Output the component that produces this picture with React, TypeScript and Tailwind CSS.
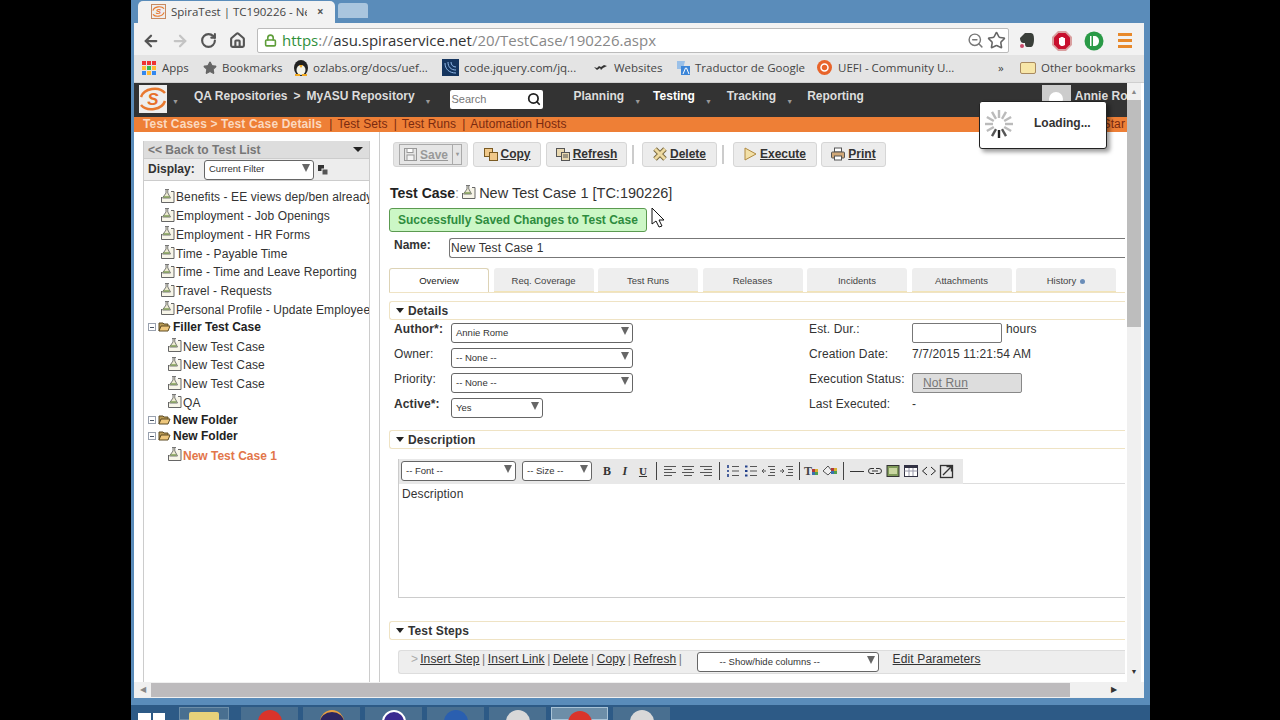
import type { ReactNode } from "react";
import { ArrowLeft, ArrowRight, Home, Lock, RotateCw, Search, Star, ZoomOut } from "lucide-react";

const treeTop = [
  "Benefits - EE views dep/ben already",
  "Employment - Job Openings",
  "Employment - HR Forms",
  "Time - Payable Time",
  "Time - Time and Leave Reporting",
  "Travel - Requests",
  "Personal Profile - Update Employee",
];

const tabs = ["Req. Coverage", "Test Runs", "Releases", "Incidents", "Attachments"];

const taskItems = [
  { w: "w-[57px]", color: "#d9342b", ring: "" },
  { w: "w-[57px]", color: "#2c2560", ring: "border-t-2 border-[#e8a040]" },
  { w: "w-[57px]", color: "#3a2a90", ring: "border-2 border-white" },
  { w: "w-[57px]", color: "#2a5fb0", ring: "" },
  { w: "w-[57px]", color: "#d8d8d8", ring: "" },
  { w: "w-[57px]", color: "#d9342b", ring: "", active: true },
  { w: "w-[57px]", color: "#d8d8d8", ring: "" },
];

function CaseIcon() {
  return (
    <svg width="16" height="16" viewBox="0 0 16 16" className="shrink-0 -mt-[3px]">
      <path d="M1.5 9v5.5h12.5v-11h-3" fill="#f7f5e8" stroke="#666" strokeWidth="1" />
      <path d="M5 1.5h4M6 1.5v3.5l-3.5 5h8L7.8 5V1.5" fill="#ecead0" stroke="#777" strokeWidth="1" />
      <path d="M3.5 9h6" stroke="#7a9a50" strokeWidth="1.4" />
    </svg>
  );
}

function FolderRow({ name }: { name: string }) {
  return (
    <div className="flex items-center h-4 pl-[4px]">
      <span className="w-[8px] h-[8px] border border-gray-400 flex items-center justify-center mr-[2px] shrink-0">
        <span className="w-[4px] h-px bg-gray-600" />
      </span>
      <svg width="13" height="12" viewBox="0 0 13 12" className="mr-[2px] shrink-0">
        <path d="M1 10V2h4l1 1h4v2" fill="#b99a55" stroke="#5c4a22" />
        <path d="M1 10l2-5h9l-2 5z" fill="#eec77c" stroke="#5c4a22" />
      </svg>
      <span className="font-bold text-[12px] text-[#222]">{name}</span>
    </div>
  );
}

function TreeLeaf({ name, indent, active }: { name: string; indent: string; active?: boolean }) {
  return (
    <div className={`flex items-center h-[18.75px] whitespace-nowrap overflow-hidden ${indent}`}>
      <CaseIcon />
      <span className={active ? "font-bold text-[12px] text-[#e2764a]" : "text-[12px] text-[#333] tracking-[0.1px]"}>{name}</span>
    </div>
  );
}

function Select({ label, width, indent }: { label: string; width: string; indent?: string }) {
  return (
    <div className={`h-5 bg-white border border-[#666] rounded-[3px] flex items-center justify-between pl-[4px] pr-[3px] shrink-0 font-normal tracking-normal ${width}`}>
      <span className={`text-[9.5px] text-[#333] whitespace-nowrap ${indent ?? ""}`}>{label}</span>
      <span className="w-0 h-0 border-l-[4px] border-r-[4px] border-t-[8px] border-l-transparent border-r-transparent border-t-[#666] -mt-1" />
    </div>
  );
}

function ToolButton({ label, width, icon }: { label: string; width: string; icon: ReactNode }) {
  return (
    <div className={`h-[25px] bg-[#ececec] border border-[#d6d6d6] rounded-[3px] flex items-center justify-center gap-[3px] pb-[2px] font-bold text-[12px] tracking-normal text-[#333] shrink-0 ${width}`}>
      {icon}
      <span className="underline">{label}</span>
    </div>
  );
}

function SectionHead({ title }: { title: string }) {
  return (
    <div className="h-[19px] border border-r-0 border-[#efe3c4] rounded-l-[3px] flex items-center pl-[6px] gap-[4px] bg-white">
      <span className="w-0 h-0 border-l-[4px] border-r-[4px] border-t-[5px] border-l-transparent border-r-transparent border-t-[#222]" />
      <span className="font-bold text-[12px] text-[#333]">{title}</span>
    </div>
  );
}

function Spinner() {
  const spokes = Array.from({ length: 12 }, (_, i) => i);
  return (
    <svg width="30" height="30" viewBox="0 0 30 30">
      {spokes.map((i) => (
        <rect
          key={i}
          x="13.8"
          y="1"
          width="2.4"
          height="8"
          fill={i === 6 ? "#222" : i === 5 || i === 7 ? "#555" : "#bbb"}
          transform={`rotate(${i * 30} 15 15)`}
        />
      ))}
    </svg>
  );
}

function LogoS({ size }: { size: number }) {
  return (
    <svg width={size} height={size} viewBox="0 0 28 28" className="shrink-0">
      <rect width="28" height="28" fill="#eeeeee" />
      <path d="M2 12C5 3 20 1 26 8" fill="none" stroke="#e8792f" strokeWidth="2.5" />
      <path d="M26 16C23 25 8 27 2 20" fill="none" stroke="#e8792f" strokeWidth="2.5" />
      <text x="14" y="20" textAnchor="middle" fontSize="17" fontWeight="700" fontStyle="italic" fill="#e8702a" fontFamily="Liberation Sans">S</text>
    </svg>
  );
}

function EditIcon({ d, stroke = "#555" }: { d: string; stroke?: string }) {
  return (
    <svg width="18" height="14" viewBox="0 0 18 14" className="shrink-0">
      <path d={d} fill="none" stroke={stroke} strokeWidth="1" />
    </svg>
  );
}

const Sep = ({ cls }: { cls: string }) => <span className={`w-px h-[18px] bg-[#444] shrink-0 ${cls}`} />;

function EditorIcons() {
  return (
    <div className="flex items-center h-full text-[#333]">
      <span className="font-['Liberation_Serif'] font-bold text-[12px] w-[18px] text-center">B</span>
      <span className="font-['Liberation_Serif'] italic font-bold text-[12px] w-[18px] text-center">I</span>
      <span className="font-['Liberation_Serif'] underline font-bold text-[11px] w-[18px] text-center">U</span>
      <Sep cls="mx-[4px]" />
      <EditIcon d="M3 2.5h12M3 5.5h8M3 8.5h12M3 11.5h8" />
      <EditIcon d="M3 2.5h12M5 5.5h8M3 8.5h12M5 11.5h8" />
      <EditIcon d="M3 2.5h12M7 5.5h8M3 8.5h12M7 11.5h8" />
      <Sep cls="mx-[4px]" />
      <svg width="18" height="14" viewBox="0 0 18 14" className="shrink-0">
        <path d="M8 2.5h7M8 7h7M8 11.5h7" stroke="#555" />
        <path d="M4 1v3M4 6v2M4 10v3" stroke="#22408a" strokeWidth="1.6" />
      </svg>
      <svg width="18" height="14" viewBox="0 0 18 14" className="shrink-0">
        <path d="M8 2.5h7M8 7h7M8 11.5h7" stroke="#555" />
        <path d="M3 1.5h2.5v2H3zM3 6h2.5v2H3zM3 10.5h2.5v2H3z" fill="#22408a" />
      </svg>
      <EditIcon d="M8 2.5h7M10 5.5h5M10 8.5h5M8 11.5h7M6 7H2M4 5L2 7l2 2" />
      <EditIcon d="M8 2.5h7M10 5.5h5M10 8.5h5M8 11.5h7M2 7h4M4 5l2 2-2 2" />
      <Sep cls="mx-[3px]" />
      <svg width="18" height="14" viewBox="0 0 18 14" className="shrink-0">
        <text x="1" y="11" fontSize="12" fontWeight="700" fontFamily="Liberation Serif" fill="#444">T</text>
        <rect x="9" y="5" width="3" height="3" fill="#b03a3a" />
        <rect x="12" y="5" width="3" height="3" fill="#d8b030" />
        <rect x="9" y="8" width="3" height="3" fill="#3a70b0" />
        <rect x="12" y="8" width="3" height="3" fill="#50a050" />
      </svg>
      <svg width="18" height="14" viewBox="0 0 18 14" className="shrink-0">
        <path d="M2 7l5-5 4 5-4 4z" fill="#eee" stroke="#555" />
        <rect x="10" y="4" width="3" height="3" fill="#b03a3a" />
        <rect x="13" y="4" width="3" height="3" fill="#d8b030" />
        <rect x="10" y="7" width="3" height="3" fill="#3a70b0" />
        <rect x="13" y="7" width="3" height="3" fill="#50a050" />
      </svg>
      <Sep cls="mx-[4px]" />
      <EditIcon d="M2 7.5h14" stroke="#333" />
      <EditIcon d="M8 4.5H5a2.5 2.5 0 0 0 0 5h3M10 4.5h3a2.5 2.5 0 0 1 0 5h-3M6 7h6" stroke="#333" />
      <svg width="18" height="14" viewBox="0 0 18 14" className="shrink-0">
        <rect x="3" y="1.5" width="12" height="11" fill="#7f9a5a" stroke="#333" />
        <rect x="5" y="4" width="8" height="6" fill="#c9d6a0" />
      </svg>
      <svg width="18" height="14" viewBox="0 0 18 14" className="shrink-0">
        <rect x="2.5" y="1.5" width="13" height="11" fill="#fff" stroke="#334" />
        <rect x="2.5" y="1.5" width="13" height="2.5" fill="#334" />
        <path d="M2.5 7h13M7 4v8M11 4v8" stroke="#99a" />
      </svg>
      <EditIcon d="M7 3L2.5 7 7 11M11 3l4.5 4-4.5 4" stroke="#222" />
      <svg width="18" height="16" viewBox="0 0 18 16" className="shrink-0">
        <rect x="2.5" y="2.5" width="12" height="12" fill="none" stroke="#333" strokeWidth="1.3" />
        <path d="M5 12L13 4M8.500 3.500h5v5" fill="none" stroke="#333" strokeWidth="1.3" />
      </svg>
    </div>
  );
}

export default function App() {
  return (
    <div className="w-[1280px] h-[720px] bg-black overflow-hidden relative font-['Liberation_Sans',Arial,sans-serif]">
      <div className="ml-[131px] w-[1019px] h-full bg-[#5a8cba] flex flex-col">
        {/* tab strip */}
        <div className="h-[23px] flex items-end pl-[7px] shrink-0">
          <div className="w-[197px] h-[22px] bg-[#f2f2f2] rounded-t-[5px] flex items-center pl-[13px] pb-px font-['Open_Sans',sans-serif] text-[11.5px] text-[#444]">
            <span className="mr-[5px] border border-[#c98a60] flex"><LogoS size={13} /></span>
            <span className="whitespace-nowrap w-[136px] overflow-hidden">SpiraTest | TC190226 - Ne</span>
            <span className="font-bold text-[#555] ml-[10px]">×</span>
          </div>
          <div className="w-[30px] h-[15px] bg-[#a9c5de] rounded-t-[3px] ml-[3px] mb-[5px]" />
        </div>
        {/* browser panel */}
        <div className="ml-[3px] mr-[6px] flex-1 min-h-0 flex flex-col bg-white">
          <div className="h-[32px] bg-[#f2f2f2] flex items-center pl-[8px] pt-[3px] shrink-0">
            <ArrowLeft size={18} strokeWidth={3} className="text-[#555]" />
            <ArrowRight size={18} strokeWidth={3} className="text-[#c4c4c4] ml-[11px]" />
            <RotateCw size={17} strokeWidth={3} className="text-[#555] ml-[11px]" />
            <Home size={17} strokeWidth={3} className="text-[#555] ml-[12px]" />
            <div className="ml-[11px] w-[752px] h-[25px] shrink-0 bg-white border border-[#bbb] rounded-[2px] flex items-center pl-[6px] pr-[2px] font-['Open_Sans',sans-serif] text-[15px]">
              <Lock size={13} strokeWidth={3} className="text-[#5f9e3a] mr-[5px]" />
              <span className="text-[#2f8f3a]">https</span>
              <span className="text-[#888]">://</span>
              <span className="text-[#333]">asu.spiraservice.net</span>
              <span className="text-[#888]">/20/TestCase/190226.aspx</span>
              <ZoomOut size={17} className="text-[#777] ml-auto" />
              <Star size={19} className="text-[#666] ml-[3px]" />
            </div>
            <svg width="16" height="17" viewBox="0 0 16 17" className="ml-[10px] shrink-0">
              <path d="M3 4l3-3h6c2 0 3 2 3 6s-1 8-3 8H8c-2 0-2-3-2-4H4C2 11 1 8 1 6z" fill="#3a3f3a" />
              <circle cx="3" cy="14" r="2" fill="#c94a6a" />
            </svg>
            <svg width="20" height="20" viewBox="0 0 20 20" className="ml-[17px] shrink-0">
              <path d="M6 0h8l6 6v8l-6 6H6l-6-6V6z" fill="#d9a0a0" />
              <path d="M6.5 2h7L18 6.5v7L13.5 18h-7L2 13.5v-7z" fill="#c8102e" />
              <path d="M7 13V7h1.5v3-4H10v4-4h1.500v4-3H13v7l-2 1H9z" fill="#fff" />
            </svg>
            <svg width="20" height="20" viewBox="0 0 20 20" className="ml-[12px] shrink-0">
              <circle cx="10" cy="10" r="9.500" fill="#2a9a47" />
              <path d="M6 5h1.500v10H6zM9 5h1c3 0 5 2 5 5s-2 5-5 5H9z" fill="#fff" />
            </svg>
            <span className="ml-[14px] flex flex-col gap-[3px]">
              <span className="w-[14px] h-[3px] bg-[#e8892b]" />
              <span className="w-[14px] h-[3px] bg-[#e8892b]" />
              <span className="w-[14px] h-[3px] bg-[#e8892b]" />
            </span>
          </div>
          {/* bookmarks */}
          <div className="h-[28px] bg-[#e4e4e4] border-b border-[#cfcfcf] flex items-center pl-[8px] pb-[2px] font-['Open_Sans',sans-serif] text-[11.5px] text-[#444] shrink-0 whitespace-nowrap">
            <span className="w-[14px] h-[14px] grid grid-cols-3 gap-px mr-[6px]">
              {["#e33", "#e33", "#e33", "#fb3", "#3b5", "#fb3", "#38e", "#fb3", "#38e"].map((c, i) => (
                <span key={i} style={{ backgroundColor: c }} />
              ))}
            </span>
            <span className="w-[27px]">Apps</span>
            <Star size={14} fill="#666" className="text-[#666] ml-[14px] mr-[5px]" />
            <span className="w-[59px]">Bookmarks</span>
            <svg width="16" height="17" viewBox="0 0 16 17" className="ml-[12px] mr-[4px]">
              <ellipse cx="8" cy="9" rx="7" ry="8" fill="#222" />
              <ellipse cx="8" cy="11" rx="4.500" ry="5" fill="#f2f2e8" />
              <path d="M6 6h4l-2 3z" fill="#f0a820" />
              <path d="M2 15h5v2H2zM9 15h5v2H9z" fill="#f0a820" />
            </svg>
            <span className="w-[115px]">ozlabs.org/docs/uef...</span>
            <svg width="17" height="17" viewBox="0 0 17 17" className="ml-[14px] mr-[5px]">
              <rect width="17" height="17" fill="#15355f" />
              <path d="M3 4c0 6 4 10 11 10M6 3c0 5 3 8 8 8M9 3c0 3 2 5 5 5" fill="none" stroke="#8fb8e8" strokeWidth="1" />
            </svg>
            <span className="w-[111px]">code.jquery.com/jq...</span>
            <svg width="13" height="6" viewBox="0 0 13 6" className="ml-[19px] mr-[7px]">
              <path d="M0 2l3 3 3-2 1 2 2-2 4-2-3-1-3 2-2-1-2 2z" fill="#333" />
            </svg>
            <span className="w-[48px]">Websites</span>
            <svg width="16" height="16" viewBox="0 0 16 16" className="ml-[13px] mr-[4px]">
              <path d="M2 1h8l-2 8H2z" fill="#9ac0e8" />
              <path d="M6 6h9v9H6z" fill="#3d86d8" />
              <path d="M8 14l2.500-6h1l2.500 6" fill="none" stroke="#fff" />
            </svg>
            <span className="w-[110px]">Traductor de Google</span>
            <svg width="15" height="15" viewBox="0 0 15 15" className="ml-[12px] mr-[6px]">
              <circle cx="7.500" cy="7.500" r="7.500" fill="#e8642a" />
              <circle cx="7.500" cy="7.500" r="3.500" fill="none" stroke="#fff" strokeWidth="1.500" />
            </svg>
            <span className="w-[117px]">UEFI - Community U...</span>
            <span className="ml-[43px] w-[22px]">»</span>
            <span className="w-[16px] h-[12px] border border-[#a88a60] bg-[#f7e6a8] mr-[5px] rounded-[2px] shrink-0" />
            <span>Other bookmarks</span>
          </div>
          <div className="flex-1 min-h-0 flex">
            <div className="w-[993px] shrink-0 flex flex-col">
              {/* spira nav */}
              <div className="h-[34px] bg-[#333] flex items-center pl-[5px] pb-[8px] font-bold text-[12px] text-[#ddd] whitespace-nowrap shrink-0 overflow-hidden">
                <span className="mt-[6px] flex"><LogoS size={28} /></span>
                <span className="text-[7px] text-[#999] ml-[5px] mt-[12px]">▼</span>
                <span className="ml-[15px]">QA Repositories</span>
                <span className="ml-[6px]">&gt;</span>
                <span className="ml-[6px]">MyASU Repository</span>
                <span className="text-[7px] text-[#999] ml-[10px] mt-[12px]">▼</span>
                <div className="ml-[18px] w-[93px] h-[19px] mt-[6px] shrink-0 bg-white rounded-[2px] flex items-center justify-between px-[2px] font-normal text-[11px] text-[#777]">
                  Search
                  <Search size={14} strokeWidth={3} className="text-[#222]" />
                </div>
                <span className="ml-[31px]">Planning</span>
                <span className="text-[7px] text-[#999] ml-[10px] mt-[12px]">▼</span>
                <span className="ml-[12px] text-white">Testing</span>
                <span className="text-[7px] text-[#999] ml-[10px] mt-[12px]">▼</span>
                <span className="ml-[15px]">Tracking</span>
                <span className="text-[7px] text-[#999] ml-[10px] mt-[12px]">▼</span>
                <span className="ml-[14px]">Reporting</span>
                <span className="w-[29px] h-[29px] bg-[#ccc] ml-[178px] flex items-center justify-center shrink-0 mt-[6px]">
                  <span className="w-[14px] h-[14px] bg-white rounded-full" />
                </span>
                <span className="ml-[4px]">Annie Rome</span>
              </div>
              {/* orange subnav */}
              <div className="h-[15px] bg-[#ee7f36] flex items-center pl-[9px] pr-[2px] pb-px text-[12px] tracking-[0.1px] text-[#7a2a10] whitespace-nowrap shrink-0 overflow-hidden">
                <span className="font-bold text-[#fbd9c0] tracking-[0.15px]">Test Cases &gt; Test Case Details</span>
                <span className="ml-[7px]">|</span>
                <span className="ml-[5px]">Test Sets</span>
                <span className="ml-[6px]">|</span>
                <span className="ml-[5px]">Test Runs</span>
                <span className="ml-[6px]">|</span>
                <span className="ml-[5px]">Automation Hosts</span>
                <span className="ml-auto">Star</span>
              </div>
              {/* page body */}
              <div className="flex-1 min-h-0 flex">
                <div className="w-[9px] shrink-0" />
                <aside className="w-[227px] shrink-0 pt-[9px] flex flex-col">
                  <div className="h-full border-x border-[#ccc] flex flex-col">
                    <div className="h-[17px] bg-[#ddd] flex items-center justify-between pl-[4px] pr-[6px] font-bold text-[12px] text-[#777]">
                      <span>&lt;&lt; Back to Test List</span>
                      <span className="w-0 h-0 border-l-[5px] border-r-[5px] border-t-[5px] border-l-transparent border-r-transparent border-t-[#222]" />
                    </div>
                    <div className="h-[23px] bg-[#ededed] border-y border-[#ccc] flex items-center pl-[4px] font-bold text-[12px] text-[#333]">
                      <span className="w-[56px] -mt-[2px]">Display:</span>
                      <Select label="Current Filter" width="w-[110px]" />
                      <svg width="10" height="10" viewBox="0 0 10 10" className="ml-[4px]">
                        <rect x="0" y="0" width="6" height="6" fill="#333" />
                        <rect x="4" y="4" width="6" height="6" fill="#555" stroke="#eee" />
                      </svg>
                    </div>
                    <div className="pt-[7px] flex-1 overflow-hidden">
                      {treeTop.map((name) => (
                        <TreeLeaf key={name} name={name} indent="pl-[16px]" />
                      ))}
                      <FolderRow name="Filler Test Case" />
                      <div className="pt-[2px]">
                        <TreeLeaf name="New Test Case" indent="pl-[23px]" />
                        <TreeLeaf name="New Test Case" indent="pl-[23px]" />
                        <TreeLeaf name="New Test Case" indent="pl-[23px]" />
                        <TreeLeaf name="QA" indent="pl-[23px]" />
                      </div>
                      <FolderRow name="New Folder" />
                      <FolderRow name="New Folder" />
                      <div className="pt-[2px]">
                        <TreeLeaf name="New Test Case 1" indent="pl-[23px]" active />
                      </div>
                    </div>
                  </div>
                </aside>
                <div className="w-[10px] shrink-0 border-r border-[#ccc]" />
                <div className="w-[9px] shrink-0" />
                <main className="w-[736px] shrink-0 overflow-hidden text-[12px] tracking-[0.13px] text-[#333]">
                  <div className="h-[35px] flex items-end pl-[4px]">
                    <div className="h-[25px] w-[75px] mr-[5px] bg-[#e6e6e6] border border-[#d6d6d6] rounded-[3px] flex items-center px-[5px] shrink-0">
                      <div className="h-[21px] w-full border border-[#aaa] flex items-center pl-[4px] font-bold tracking-normal text-[#999] gap-[3px]">
                        <svg width="13" height="13" viewBox="0 0 13 13" className="shrink-0">
                          <rect x="0.500" y="0.500" width="12" height="12" fill="#e4e4e4" stroke="#999" />
                          <rect x="3" y="0.500" width="6" height="4" fill="#fff" stroke="#999" />
                          <rect x="3" y="7" width="7" height="5.500" fill="#f4f4f4" stroke="#999" />
                        </svg>
                        <span className="underline">Save</span>
                        <span className="ml-auto w-[9px] h-full border-l border-[#aaa] text-[6px] leading-[19px] text-center">▾</span>
                      </div>
                    </div>
                    <ToolButton
                      label="Copy"
                      width="w-[68px] mr-[5px]"
                      icon={
                        <svg width="14" height="14" viewBox="0 0 14 14">
                          <rect x="0.500" y="1.500" width="8" height="8" fill="#f0c88a" stroke="#7a5a22" />
                          <rect x="5.500" y="5.500" width="8" height="8" fill="#f0c88a" stroke="#7a5a22" />
                        </svg>
                      }
                    />
                    <ToolButton
                      label="Refresh"
                      width="w-[81px]"
                      icon={
                        <svg width="14" height="14" viewBox="0 0 14 14">
                          <rect x="0.500" y="1.500" width="8" height="8" fill="#e8d8b0" stroke="#555" />
                          <rect x="5.500" y="5.500" width="8" height="8" fill="#e8d8b0" stroke="#555" />
                          <path d="M7 8h5M7 10h5" stroke="#555" />
                        </svg>
                      }
                    />
                    <span className="w-[2px] h-[19px] bg-[#ccc] ml-[5px] mr-[8px] mb-[3px]" />
                    <ToolButton
                      label="Delete"
                      width="w-[75px]"
                      icon={
                        <svg width="14" height="14" viewBox="0 0 14 14">
                          <path d="M2 2l10 10M12 2L2 12" stroke="#7a6a40" strokeWidth="5" />
                          <path d="M2 2l10 10M12 2L2 12" stroke="#edd9a0" strokeWidth="3" />
                        </svg>
                      }
                    />
                    <span className="w-[2px] h-[19px] bg-[#ccc] ml-[5px] mr-[9px] mb-[3px]" />
                    <ToolButton
                      label="Execute"
                      width="w-[84px] mr-[4px]"
                      icon={
                        <svg width="13" height="14" viewBox="0 0 13 14">
                          <path d="M1 1l11 6-11 6z" fill="#f2e0a8" stroke="#b08a40" />
                        </svg>
                      }
                    />
                    <ToolButton
                      label="Print"
                      width="w-[65px]"
                      icon={
                        <svg width="14" height="14" viewBox="0 0 14 14">
                          <rect x="3.500" y="1" width="7" height="4" fill="#fff" stroke="#555" />
                          <rect x="0.500" y="5" width="13" height="6" rx="1" fill="#d0a878" stroke="#555" />
                          <rect x="3.500" y="9" width="7" height="4" fill="#fff" stroke="#555" />
                        </svg>
                      }
                    />
                  </div>
                  <div className="h-[17px] mt-[18px] flex items-center pl-px text-[14.5px] tracking-normal whitespace-nowrap">
                    <span className="font-bold text-[#222] text-[14px]">Test Case</span>
                    <span className="text-[#999] mr-[2px]">:</span>
                    <CaseIcon />
                    <span className="ml-[2px]">New Test Case 1 [TC:190226]</span>
                  </div>
                  <div className="mt-[6px] h-[24px] w-[258px] bg-[#ccf7c6] border border-[#5b9a50] rounded-[3px] flex items-center pl-[8px] font-bold tracking-normal text-[#2e8c3e] whitespace-nowrap">
                    Successfully Saved Changes to Test Case
                  </div>
                  <div className="mt-[6px] flex items-center h-[20px]">
                    <span className="w-[60px] pl-[5px] font-bold tracking-normal -mt-[6px]">Name:</span>
                    <div className="h-[20px] flex-1 bg-white border border-[#777] border-r-0 rounded-l-[3px] flex items-center pl-px text-[#333]">New Test Case 1</div>
                  </div>
                  <div className="mt-[11px] h-[24px] flex items-end gap-[4.500px] border-b border-[#efe3c4] text-[9.500px] tracking-normal">
                    <div className="w-[100px] h-[24px] bg-white border border-b-0 border-[#ddd3b6] rounded-t-[3px] flex items-center justify-center pt-[2px] text-[#222]">Overview</div>
                    {tabs.map((t) => (
                      <div key={t} className="w-[100px] h-[24px] bg-[#eeeeee] border-b border-[#f2e4b8] rounded-t-[3px] flex items-center justify-center pt-[3px] text-[#444]">{t}</div>
                    ))}
                    <div className="w-[100px] h-[24px] bg-[#eeeeee] border-b border-[#f2e4b8] rounded-t-[3px] flex items-center justify-center gap-[4px] pt-[3px] text-[#444]">
                      History
                      <span className="w-[5px] h-[5px] bg-[#6a8db8] rounded-full" />
                    </div>
                  </div>
                  <div className="mt-[8px]">
                    <SectionHead title="Details" />
                  </div>
                  <div className="flex pt-[3px] h-[110px]">
                    <div className="w-[420px] grid grid-cols-[57px_auto] auto-rows-[25px] items-start content-start pl-[5px] justify-start">
                      <span className="font-bold -mt-[3px]">Author*:</span>
                      <Select label="Annie Rome" width="w-[182px]" />
                      <span className="-mt-[3px]">Owner:</span>
                      <Select label="-- None --" width="w-[182px]" />
                      <span className="-mt-[3px]">Priority:</span>
                      <Select label="-- None --" width="w-[182px]" />
                      <span className="font-bold -mt-[3px]">Active*:</span>
                      <Select label="Yes" width="w-[92px]" />
                    </div>
                    <div className="grid grid-cols-[103px_auto] auto-rows-[25px] items-start content-start justify-start">
                      <span className="-mt-[3px]">Est. Dur.:</span>
                      <div className="flex items-start gap-[4px]">
                        <span className="w-[90px] h-[20px] bg-white border border-[#777] rounded-[2px]" />
                        <span className="-mt-[3px]">hours</span>
                      </div>
                      <span className="-mt-[3px]">Creation Date:</span>
                      <span className="-mt-[3px]">7/7/2015 11:21:54 AM</span>
                      <span className="-mt-[3px]">Execution Status:</span>
                      <span className="w-[110px] h-[20px] bg-[#ddd] border border-[#888] rounded-[2px] flex items-center pl-[10px] underline text-[#777]">Not Run</span>
                      <span className="-mt-[3px]">Last Executed:</span>
                      <span className="-mt-[3px]">-</span>
                    </div>
                  </div>
                  <SectionHead title="Description" />
                  <div className="ml-[9px] mt-[10px] h-[139px] border-l border-b border-[#ccc]">
                    <div className="h-[25px] w-full border-b border-[#ddd] flex items-center">
                      <div className="h-[25px] w-[564px] bg-[#e8e8e8] flex items-center pl-[2px] gap-[6px]">
                        <Select label="-- Font --" width="w-[115px]" />
                        <Select label="-- Size --" width="w-[70px]" />
                        <EditorIcons />
                      </div>
                    </div>
                    <div className="pl-[3px] pt-px">Description</div>
                  </div>
                  <div className="mt-[23px]">
                    <SectionHead title="Test Steps" />
                  </div>
                  <div className="ml-[9px] mt-[10px] h-[24px] bg-[#eeeeee] border border-r-0 border-[#ddd] rounded-l-[3px] flex items-center pl-[12px] whitespace-nowrap">
                    <div className="flex items-center -mt-[6px]">
                      <span className="text-[#aaa] mr-[2px]">&gt;</span>
                      <span className="underline">Insert Step</span>
                      <span className="mx-[2.500px] text-[#777]">|</span>
                      <span className="underline">Insert Link</span>
                      <span className="mx-[2.500px] text-[#777]">|</span>
                      <span className="underline">Delete</span>
                      <span className="mx-[2.500px] text-[#777]">|</span>
                      <span className="underline">Copy</span>
                      <span className="mx-[2.500px] text-[#777]">|</span>
                      <span className="underline">Refresh</span>
                      <span className="mx-[2.500px] text-[#777]">|</span>
                    </div>
                    <div className="ml-[12px]">
                      <Select label="-- Show/hide columns --" width="w-[182px]" indent="ml-[18px]" />
                    </div>
                    <span className="underline ml-[14px] -mt-[6px]">Edit Parameters</span>
                  </div>
                </main>
              </div>
            </div>
            {/* vertical scrollbar */}
            <div className="w-[14px] shrink-0 bg-[#f0f0f0] flex flex-col items-center">
              <span className="h-[17px] text-[7px] leading-[17px] text-[#888]">▲</span>
              <span className="w-full h-[227px] bg-[#bdbdbd]" />
              <span className="mt-auto h-[15px] text-[7px] text-[#333]">▼</span>
            </div>
          </div>
          {/* horizontal scrollbar */}
          <div className="h-[16px] bg-[#f0f0f0] flex items-center shrink-0 text-[8px] text-[#888]">
            <span className="w-[17px] text-center">◀</span>
            <span className="w-[919px] h-[14px] bg-[#bdbbbd]" />
            <span className="ml-[41px] text-[#333]">▶</span>
          </div>
        </div>
        <div className="h-[7px] bg-[#5a8cba] shrink-0" />
        {/* taskbar */}
        <div className="h-[15px] bg-[#2d5a86] shrink-0 flex items-start pl-[48px] pt-[2px] overflow-hidden">
          <div className="w-[50px] h-[13px] bg-[#496f90] border border-[#6d8ea8] flex justify-center mr-[12px]">
            <span className="w-[30px] h-[8px] mt-[4px] rounded-t-[2px] bg-[#e8d27a]" />
          </div>
          <div className="flex gap-[5px]">
            {taskItems.map((t, i) => (
              <div key={i} className={`h-[13px] flex justify-center ${t.w} ${t.active ? "bg-[#6d8ea8] border border-[#a9c3d6]" : "bg-[#496f90]"}`}>
                <span className={`w-[24px] h-[24px] mt-[3px] rounded-full ${t.ring}`} style={{ backgroundColor: t.color }} />
              </div>
            ))}
          </div>
        </div>
      </div>
      {/* windows logo on the taskbar */}
      <div className="absolute left-[138px] top-[713px] w-[27px] h-[7px] bg-white flex justify-center">
        <span className="w-[2px] h-full bg-[#2d5a86]" />
      </div>
      {/* loading popup */}
      <div className="absolute left-[979px] top-[101px] w-[128px] h-[48px] bg-white border border-[#222] rounded-[3px] shadow-[3px_3px_4px_rgba(0,0,0,0.4)] flex items-center pl-[4px] pb-[2px] text-[12px] font-bold text-[#333]">
        <Spinner />
        <span className="ml-[20px] -mt-[2px]">Loading...</span>
      </div>
      {/* mouse cursor */}
      <svg className="absolute left-[651px] top-[207px]" width="14" height="22" viewBox="0 0 14 22">
        <path d="M1 1v16l4-3 3 6 3-1-3-6h5z" fill="#fff" stroke="#111" strokeWidth="1" />
      </svg>
    </div>
  );
}
